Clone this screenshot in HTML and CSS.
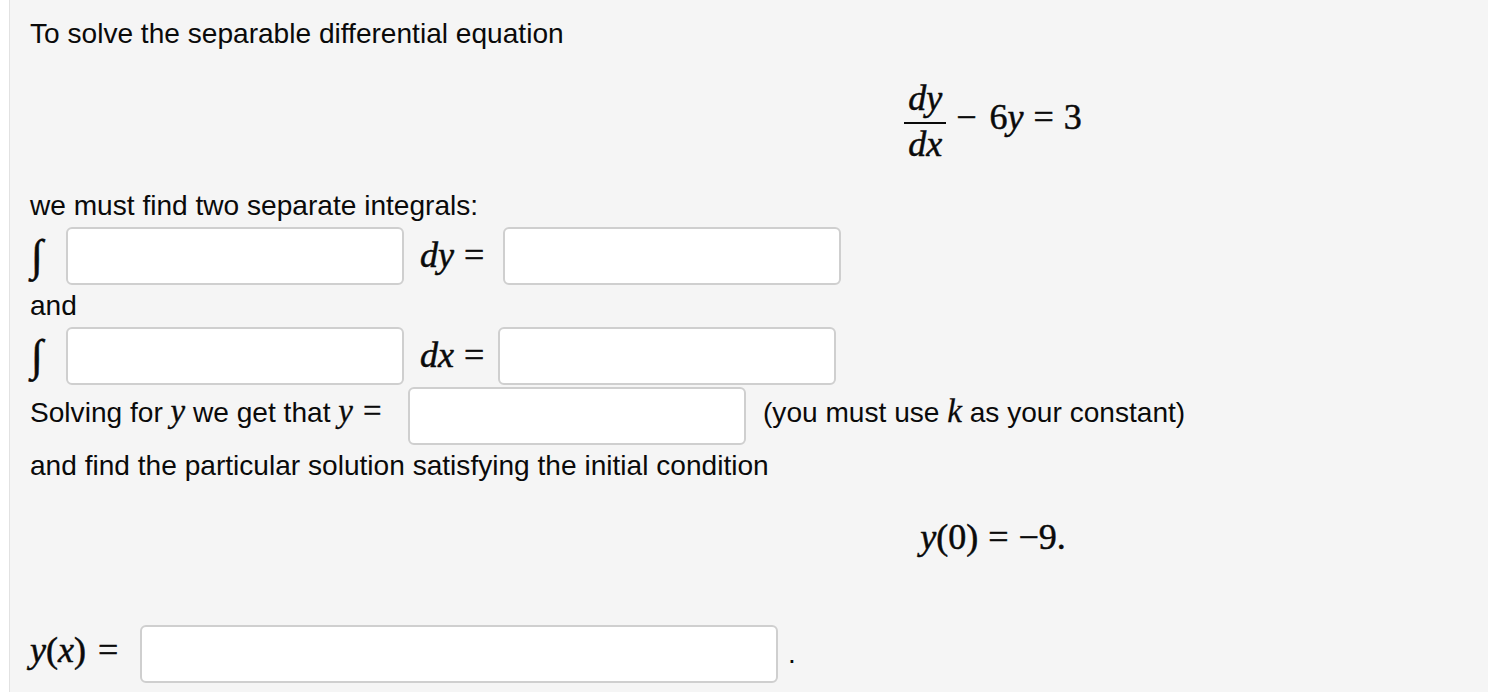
FILE: index.html
```html
<!DOCTYPE html>
<html>
<head>
<meta charset="utf-8">
<link rel="stylesheet" href="styles.css">
</head>
<body>
<div class="problem">
  <div class="text">To solve the separable differential equation</div>
  <div class="disp d1">
    <span class="frac m">
      <span class="num"><i>dy</i></span>
      <span class="bar"></span>
      <span class="den"><i>dx</i></span>
    </span>
    <span class="m eq"><span class="minus">−</span>6<i>y</i><span class="rel">=</span>3</span>
  </div>
  <div class="text">we must find two separate integrals:</div>
  <div class="row">
    <span class="int m">∫</span>
    <input class="ans" type="text">
    <span class="lbl lbl-dy m"><i>dy</i><span class="rel">=</span></span>
    <input class="ans" type="text">
  </div>
  <div class="text">and</div>
  <div class="row">
    <span class="int m">∫</span>
    <input class="ans" type="text">
    <span class="lbl lbl-dx m"><i>dx</i><span class="rel">=</span></span>
    <input class="ans" type="text">
  </div>
  <div class="row row3">
    <span class="lead-solve">Solving for <i class="m im">y</i> we get that <i class="m im">y</i><span class="m im rel">=</span></span>
    <input class="ans" type="text">
    <span class="note">(you must use <i class="m im">k</i> as your constant)</span>
  </div>
  <div class="text">and find the particular solution satisfying the initial condition</div>
  <div class="disp d2">
    <span class="m"><i>y</i>(0)<span class="rel">=</span>−9.</span>
  </div>
  <div class="row">
    <span class="lead-yx m"><i>y</i>(<i>x</i>)<span class="rel">=</span></span>
    <input class="ans wide" type="text">
    <span class="dot">.</span>
  </div>
</div>
</body>
</html>
```

FILE: styles.css
```css
* {
  box-sizing: border-box;
}

html, body {
  margin: 0;
  background: #ffffff;
}

body {
  font-family: "Liberation Sans", Arial, Helvetica, sans-serif;
  font-size: 28.1px;
  color: #0a0a0a;
}

.problem {
  margin-left: 9px;
  border-left: 1px solid #e2e2e2;
  background: #f5f5f5;
  padding: 13px 0 0 20px;
  height: 692px;
  overflow: hidden;
}

.text {
  height: 42px;
  line-height: 42px;
  white-space: nowrap;
}

.m {
  font-family: "Liberation Serif", "Times New Roman", serif;
  font-size: 36px;
  font-style: normal;
  -webkit-text-stroke: 0.5px #0a0a0a;
}

.m i, i.m {
  font-style: italic;
}

.im {
  font-size: 33px;
  -webkit-text-stroke: 0.3px #0a0a0a;
}

.disp {
  display: flex;
  justify-content: center;
  align-items: center;
  padding-left: 468px;
}

.d1 {
  height: 130px;
  padding-top: 2px;
}

.d2 {
  height: 100px;
  margin-bottom: 38px;
}

.frac {
  display: inline-flex;
  flex-direction: column;
  align-items: center;
}

.num, .den {
  line-height: 36px;
  padding: 0 4px;
}

.num {
  padding-bottom: 4px;
}

.bar {
  align-self: stretch;
  height: 2px;
  background: #0a0a0a;
  margin: 2px 0;
}

.eq {
  padding-bottom: 8px;
}

.minus {
  margin: 0 13px 0 10px;
}

.rel {
  margin: 0 10px;
}

.row {
  display: flex;
  align-items: center;
  height: 58px;
  white-space: nowrap;
  line-height: 42px;
}

.row .m, .row i.m {
  line-height: 1;
}

.row3 {
  margin-top: 2px;
}

.int {
  width: 36px;
  padding-left: 1px;
  font-size: 44px;
  font-style: italic;
}

.ans {
  width: 338px;
  height: 58px;
  margin: 0;
  padding: 0 10px;
  border: 2px solid #cfcfcf;
  border-radius: 6px;
  background: #ffffff;
  font: inherit;
}

.wide {
  width: 638px;
}

.lbl {
  padding-left: 16px;
  padding-bottom: 3px;
}

.lbl-dy {
  width: 99px;
}

.lbl-dx {
  width: 94px;
}

.lead-solve {
  width: 378px;
  padding-bottom: 6px;
}

.lead-yx {
  width: 110px;
  padding-bottom: 9px;
}

.lead-yx .rel {
  margin-left: 12px;
}

.note {
  margin-left: 17px;
  padding-bottom: 6px;
}

.dot {
  margin-left: 10px;
}
```
